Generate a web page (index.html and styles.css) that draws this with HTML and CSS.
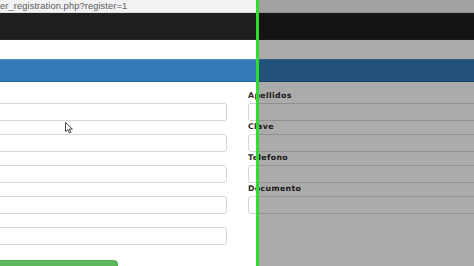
FILE: index.html
```html
<!DOCTYPE html>
<html lang="es">
<head>
<meta charset="utf-8">
<title>Registro</title>
<link rel="stylesheet" href="styles.css">
</head>
<body>
<div class="page">
  <div class="urlbar">er_registration.php?register=1</div>
  <div class="navbar"></div>
  <div class="spacer"></div>
  <div class="header"></div>
  <form class="form">
    <div class="col col-left">
      <div class="field"><span class="label"></span><input class="input" type="text"></div>
      <div class="field"><span class="label"></span><input class="input" type="text"></div>
      <div class="field"><span class="label"></span><input class="input" type="text"></div>
      <div class="field"><span class="label"></span><input class="input" type="text"></div>
      <div class="field"><span class="label"></span><input class="input" type="text"></div>
      <button class="btn" type="button"></button>
    </div>
    <div class="col col-right">
      <div class="field"><label class="label">Apellidos</label><input class="input" type="text"></div>
      <div class="field"><label class="label">Clave</label><input class="input" type="password"></div>
      <div class="field"><label class="label">Telefono</label><input class="input" type="text"></div>
      <div class="field"><label class="label">Documento</label><input class="input" type="text"></div>
    </div>
  </form>
  <div class="shade"></div>
  <div class="divider"></div>
  <svg class="cursor" width="9" height="12" viewBox="0 0 9 12"><path d="M0.5 0.5 L0.5 9.5 L2.8 7.6 L4.4 11 L5.8 10.4 L4.3 7.1 L7.4 7.1 Z" fill="#fff" stroke="#333" stroke-width="0.9" stroke-linejoin="round"/></svg>
</div>
</body>
</html>
```
FILE: styles.css
```css
* { box-sizing: border-box; }
html, body { margin: 0; padding: 0; }
body { width: 474px; height: 266px; overflow: hidden; background: #fff; font-family: "DejaVu Sans", sans-serif; }
.page { position: relative; width: 474px; height: 266px; overflow: hidden; }
.urlbar {
  height: 13px; background: #f2f2f4; border-bottom: 1px solid #dcdcdc;
  color: #5a5a5a; font-family: "Liberation Sans", sans-serif; font-size: 9.3px; line-height: 12px;
  white-space: nowrap; letter-spacing: 0.1px;
}
.navbar { height: 27px; background: #1f1f1f; border-bottom: 1px solid #2a2a2a; }
.spacer { height: 19px; background: #fff; }
.header { height: 23px; background: #337ab7; border-top: 1px solid #4a8cc6; border-bottom: 1px solid #2a6496; }
.form { display: flex; gap: 21px; margin-left: -20px; padding-top: 8px; }
.col { width: 247px; flex-shrink: 0; display: flex; flex-direction: column; }
.field { display: flex; flex-direction: column; }
.label { display: block; height: 13px; line-height: 12px; font-size: 7.8px; font-weight: bold; color: #2a2a2a; letter-spacing: 0.35px; }
.input { height: 18px; width: 100%; border: 1px solid #d6d6d6; border-radius: 3px; background: #fff; margin: 0; padding: 0; }
.btn { margin-top: 15px; width: 138px; height: 30px; background: #5cb85c; border: 1px solid #4cae4c; border-radius: 4px; padding: 0; }
.shade { position: absolute; left: 259px; top: 0; right: 0; bottom: 0; background: rgba(0,0,0,0.33); }
.divider { position: absolute; left: 256px; top: 0; width: 3px; bottom: 0; background: #2fdc2f; }
.cursor { position: absolute; left: 65px; top: 122px; }
```
